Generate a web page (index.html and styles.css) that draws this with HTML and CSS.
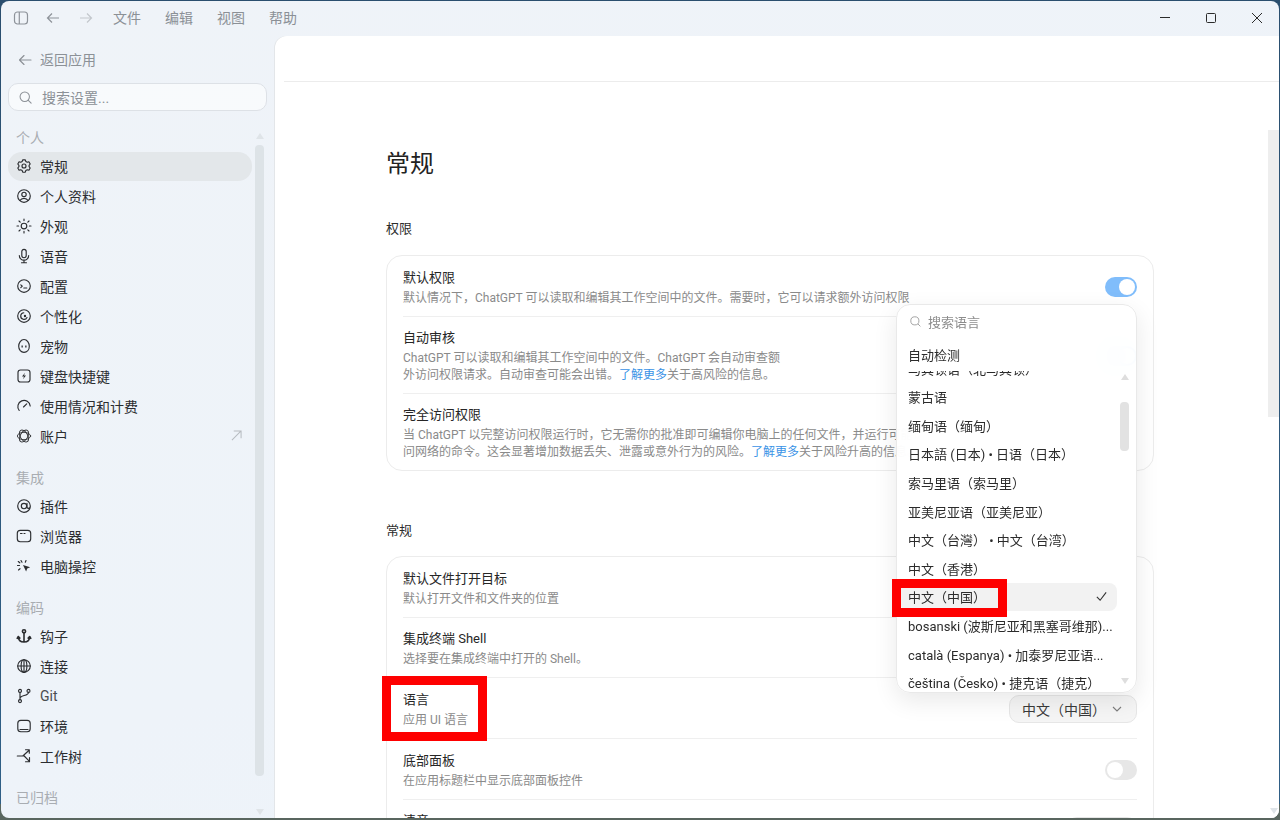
FILE: index.html
```html
<!DOCTYPE html>
<html lang="zh-CN">
<head>
<meta charset="utf-8">
<title>设置</title>
<link rel="stylesheet" href="styles.css">
</head>
<body>
<div class="stage">
  <div class="window">
    <header class="titlebar">
      <svg class="tb-icon panel" viewBox="0 0 16 16"><rect x="1.5" y="2" width="13" height="12" rx="3"/><path d="M6.3 2v12"/></svg>
      <svg class="tb-icon back" viewBox="0 0 16 16"><path d="M14 8H2.5M7 3.5 2.5 8 7 12.500"/></svg>
      <svg class="tb-icon forward" viewBox="0 0 16 16"><path d="M2 8h11.500M9 3.500 13.500 8 9 12.500"/></svg>
      <nav class="menus"><span>文件</span><span>编辑</span><span>视图</span><span>帮助</span></nav>
      <div class="win-controls">
        <svg class="win-icon" viewBox="0 0 10 10"><path d="M0 4.500h10"/></svg>
        <svg class="win-icon" viewBox="0 0 10 10"><rect x=".5" y=".5" width="9" height="9" rx="1"/></svg>
        <svg class="win-icon" viewBox="0 0 10 10"><path d="M0 0l10 10M10 0 0 10"/></svg>
      </div>
    </header>

    <aside class="sidebar">
      <div class="back-row">
        <svg class="ic" viewBox="0 0 16 16"><path d="M14 8H2.500M7 3.500 2.500 8 7 12.500"/></svg>
        <span>返回应用</span>
      </div>
      <div class="search">
        <svg class="ic" viewBox="0 0 16 16"><circle cx="7.200" cy="7.200" r="5"/><path d="m11 11 3 3"/></svg>
        <span>搜索设置...</span>
      </div>
      <div class="side-body">
        <div class="side-list">
          <div class="group-label">个人</div>
          <div class="item active"><svg class="ic" viewBox="0 0 16 16"><path d="M6.700 1.800h2.600l.5 1.600 1.500.8 1.600-.4 1.300 2.200-1.100 1.300v1.400l1.100 1.300-1.300 2.200-1.600-.4-1.500.8-.5 1.600H6.700l-.5-1.600-1.500-.8-1.600.4-1.300-2.200 1.100-1.300V7.300L1.800 6l1.300-2.200 1.600.4 1.500-.8z"/><circle cx="8" cy="8" r="2"/></svg><span>常规</span></div>
          <div class="item"><svg class="ic" viewBox="0 0 16 16"><circle cx="8" cy="8" r="6.300"/><circle cx="8" cy="6.400" r="2.200"/><path d="M4 12.600c.8-1.600 2.300-2.300 4-2.300s3.200.7 4 2.300"/></svg><span>个人资料</span></div>
          <div class="item"><svg class="ic" viewBox="0 0 16 16"><circle cx="8" cy="8" r="2.800"/><path d="M8 1v1.600M8 13.400V15M1 8h1.600M13.400 8H15M3 3l1.200 1.200M11.800 11.800 13 13M3 13l1.200-1.200M11.800 4.200 13 3"/></svg><span>外观</span></div>
          <div class="item"><svg class="ic" viewBox="0 0 16 16"><rect x="5.800" y="1.300" width="4.400" height="8.400" rx="2.200"/><path d="M3.300 7.500a4.700 4.700 0 0 0 9.400 0M8 12.200v2.500M5.500 14.700h5"/></svg><span>语音</span></div>
          <div class="item"><svg class="ic" viewBox="0 0 16 16"><circle cx="8" cy="8" r="6.300"/><path d="m4.800 6.800 1.500 1.400-1.500 1.400M7.800 10h3"/></svg><span>配置</span></div>
          <div class="item"><svg class="ic" viewBox="0 0 16 16"><circle cx="8" cy="8" r="6.300"/><path d="M7.800 4.800A3.300 3.300 0 1 0 11 9.500"/><circle cx="9" cy="8" r=".6"/></svg><span>个性化</span></div>
          <div class="item"><svg class="ic" viewBox="0 0 16 16"><path d="M8 1.500c3.100 0 5.300 3.300 5.300 6.800s-2.300 6-5.300 6-5.300-2.500-5.300-6S4.900 1.500 8 1.500z"/><path class="solid" d="M5.500 7.400h1.300v2H5.500zM9.200 7.400h1.300v2H9.200z"/></svg><span>宠物</span></div>
          <div class="item"><svg class="ic" viewBox="0 0 16 16"><rect x="2" y="2" width="12" height="12" rx="2.500"/><path class="solid" d="M9 4.800 6 8.400h2L7 11.200l3-3.600H8z"/></svg><span>键盘快捷键</span></div>
          <div class="item"><svg class="ic" viewBox="0 0 16 16"><path d="M3.200 12.500A6.200 6.200 0 1 1 14.200 8"/><path d="m7.500 9 3.200-3.200"/></svg><span>使用情况和计费</span></div>
          <div class="item"><svg class="ic thin" viewBox="0 0 16 16"><ellipse cx="8" cy="8" rx="6.600" ry="3.700"/><ellipse cx="8" cy="8" rx="6.600" ry="3.700" transform="rotate(60 8 8)"/><ellipse cx="8" cy="8" rx="6.600" ry="3.700" transform="rotate(120 8 8)"/></svg><span>账户</span><svg class="ext" viewBox="0 0 12 12"><path d="M1 11 11 1M3 1h8v8"/></svg></div>

          <div class="group-label spaced">集成</div>
          <div class="item"><svg class="ic" viewBox="0 0 16 16"><path d="M14.300 8.500c0 3-2.700 5.800-6.300 5.800a6.300 6.300 0 1 1 6.300-6.300c0 1.500-.7 2.400-1.800 2.400-.9 0-1.500-.6-1.500-1.400V5.300"/><circle cx="8" cy="8" r="2.700"/></svg><span>插件</span></div>
          <div class="item"><svg class="ic" viewBox="0 0 16 16"><rect x="1.300" y="2.300" width="13.400" height="11.400" rx="3"/><path d="M4.500 5.500h1.600M8 5.500h1"/></svg><span>浏览器</span></div>
          <div class="item"><svg class="ic" viewBox="0 0 16 16"><path d="M1.500 7.500h2M5 2.500l1 1.700M2.300 3.500l1.500 1.300M2.500 12l1.500-1.300M10 2.500 9.300 4.200"/><path class="solid" d="m7 7 7.200 2.300-3 1.100-1.100 3.200z"/></svg><span>电脑操控</span></div>

          <div class="group-label spaced">编码</div>
          <div class="item"><svg class="ic bold" viewBox="0 0 16 16"><circle cx="8" cy="3.300" r="1.600"/><path d="M8 5v9M2.300 8.800c0 3.400 2.500 5.200 5.700 5.200s5.700-1.800 5.700-5.200M1.200 10.300l1.100-1.800 1.500 1.600M12.200 10.100l1.500-1.600 1.100 1.800"/></svg><span>钩子</span></div>
          <div class="item"><svg class="ic" viewBox="0 0 16 16"><circle cx="8" cy="8" r="6.300"/><ellipse cx="8" cy="8" rx="2.900" ry="6.300"/><path d="M1.700 8h12.600M8 1.700v12.600"/></svg><span>连接</span></div>
          <div class="item"><svg class="ic" viewBox="0 0 16 16"><circle cx="4" cy="2.900" r="1.500"/><circle cx="4" cy="13.100" r="1.500"/><circle cx="12.500" cy="2.900" r="1.500"/><path d="M4 4.400v7.200M12.500 4.400c0 3.600-8.500 2.600-8.500 6"/></svg><span class="latin">Git</span></div>
          <div class="item"><svg class="ic" viewBox="0 0 16 16"><rect x="1.800" y="2.300" width="12.400" height="11.400" rx="3"/><path d="M4 11.500h8"/></svg><span>环境</span></div>
          <div class="item"><svg class="ic" viewBox="0 0 16 16"><path d="M1.300 8h5.500l6-5.500M9.500 1.700h3.800v3.500M8.200 8l5 5.200M13.500 9.500v4.200H9.500"/></svg><span>工作树</span></div>

          <div class="group-label spaced">已归档</div>
        </div>
        <div class="vbar side-bar">
          <i class="arrow up"></i>
          <i class="thumb"></i>
          <i class="arrow down"></i>
        </div>
      </div>
    </aside>

    <main class="main">
      <div class="band"></div>
      <div class="content">
        <h1>常规</h1>
        <h2>权限</h2>
        <section class="card perms">
          <div class="row">
            <div class="txt">
              <div class="t">默认权限</div>
              <div class="d">默认情况下，ChatGPT 可以读取和编辑其工作空间中的文件。需要时，它可以请求额外访问权限</div>
            </div>
            <span class="toggle on"><i></i></span>
          </div>
          <div class="row">
            <div class="txt">
              <div class="t">自动审核</div>
              <div class="d">ChatGPT 可以读取和编辑其工作空间中的文件。ChatGPT 会自动审查额<br>外访问权限请求。自动审查可能会出错。<a>了解更多</a>关于高风险的信息。</div>
            </div>
            <span class="toggle on"><i></i></span>
          </div>
          <div class="row">
            <div class="txt">
              <div class="t">完全访问权限</div>
              <div class="d">当 ChatGPT 以完整访问权限运行时，它无需你的批准即可编辑你电脑上的任何文件，并运行可能访<br>问网络的命令。这会显著增加数据丢失、泄露或意外行为的风险。<a>了解更多</a>关于风险升高的信息。</div>
            </div>
          </div>
        </section>

        <h2 class="second">常规</h2>
        <section class="card">
          <div class="row">
            <div class="txt">
              <div class="t">默认文件打开目标</div>
              <div class="d">默认打开文件和文件夹的位置</div>
            </div>
          </div>
          <div class="row">
            <div class="txt">
              <div class="t">集成终端 Shell</div>
              <div class="d">选择要在集成终端中打开的 Shell。</div>
            </div>
          </div>
          <div class="row">
            <div class="txt">
              <div class="t">语言</div>
              <div class="d">应用 UI 语言</div>
            </div>
            <div class="select">
              <span>中文（中国）</span>
              <svg viewBox="0 0 12 12"><path d="m2 4 4 4 4-4"/></svg>
            </div>
          </div>
          <div class="row">
            <div class="txt">
              <div class="t">底部面板</div>
              <div class="d">在应用标题栏中显示底部面板控件</div>
            </div>
            <span class="toggle"><i></i></span>
          </div>
          <div class="row">
            <div class="txt">
              <div class="t">清音</div>
              <div class="d">播放提示音</div>
            </div>
            <div class="select small"></div>
          </div>
        </section>
      </div>
      <div class="vbar page-bar">
        <i class="thumb"></i>
        <i class="arrow down"></i>
      </div>
    </main>
  </div>

  <div class="popup">
    <div class="pop-search">
      <svg viewBox="0 0 16 16"><circle cx="7.200" cy="7.200" r="5"/><path d="m11 11 3 3"/></svg>
      <span>搜索语言</span>
    </div>
    <div class="pop-auto">自动检测</div>
    <div class="pop-body">
      <div class="pop-list">
        <div class="opt first">马其顿语（北马其顿）</div>
        <div class="opt">蒙古语</div>
        <div class="opt">缅甸语（缅甸）</div>
        <div class="opt">日本語 (日本) • 日语（日本）</div>
        <div class="opt">索马里语（索马里）</div>
        <div class="opt">亚美尼亚语（亚美尼亚）</div>
        <div class="opt">中文（台灣） • 中文（台湾）</div>
        <div class="opt">中文（香港）</div>
        <div class="opt selected"><span>中文（中国）</span><svg viewBox="0 0 14 14"><path d="m2 7.500 3.500 3.500L12 2.500"/></svg></div>
        <div class="opt">bosanski (波斯尼亚和黑塞哥维那)...</div>
        <div class="opt">català (Espanya) • 加泰罗尼亚语...</div>
        <div class="opt">čeština (Česko) • 捷克语（捷克）</div>
      </div>
      <div class="vbar pop-bar">
        <i class="arrow up"></i>
        <i class="thumb"></i>
        <i class="arrow down"></i>
      </div>
    </div>
  </div>

  <div class="mark mark-lang"></div>
  <div class="mark mark-opt"></div>
</div>
</body>
</html>
```

FILE: styles.css
```css
* { box-sizing: border-box; }
html, body { margin: 0; height: 100%; overflow: hidden; }
body {
  font-family: Roboto, "Noto Sans CJK SC", "Noto Sans", sans-serif;
  color: #2b2b2b;
  font-size: 14px;
}
.stage {
  position: relative;
  width: 1280px;
  height: 820px;
  padding: 1px 1px 2px 1px;
  overflow: hidden;
  background: linear-gradient(to bottom, #2a4e6e 0, #2f5f86 98%, #59665f 98%);
}
.window {
  height: 817px;
  border-radius: 8px;
  overflow: hidden;
  display: grid;
  grid-template-columns: 274px 1fr;
  grid-template-rows: 35px 1fr;
  background: linear-gradient(160deg, #eff3f8 0%, #eef3f9 60%, #edf4fa 100%);
}

/* title bar */
.titlebar {
  grid-column: 1 / 3;
  display: flex;
  align-items: center;
  padding: 0 0 1px 12px;
  color: #8b9096;
}
.tb-icon { width: 16px; height: 16px; fill: none; stroke: #8e939a; stroke-width: 1.200; }
.back { margin-left: 16px; }
.forward { margin-left: 17px; stroke: #c3c7cc; }
.menus { display: flex; gap: 24px; margin-left: 19px; line-height: 20px; }
.win-controls { margin-left: auto; display: flex; gap: 36px; padding-right: 17px; }
.win-icon { width: 10px; height: 10px; fill: none; stroke: #2b2b2b; stroke-width: 1; overflow: visible; }

/* sidebar */
.sidebar {
  padding: 12px 0 0 7px;
  display: flex;
  flex-direction: column;
  overflow: hidden;
  min-height: 0;
}
.ic {
  width: 16px;
  height: 16px;
  flex: none;
  fill: none;
  stroke: currentColor;
  stroke-width: 1.150;
  stroke-linejoin: round;
  stroke-linecap: round;
}
.ic.bold { stroke-width: 1.600; }
.ic.thin { stroke-width: .9; }
.ic .solid { fill: currentColor; stroke: none; }
.back-row {
  height: 24px;
  display: flex;
  align-items: center;
  gap: 7px;
  padding-left: 9px;
  color: #8c9197;
}
.back-row span { margin-top: -2px; }
.search {
  height: 28px;
  width: 259px;
  margin-top: 11px;
  display: flex;
  align-items: center;
  gap: 9px;
  padding-left: 9px;
  border: 1px solid #dde1e6;
  border-radius: 10px;
  background: rgba(255, 255, 255, .55);
  color: #8c9197;
}
.search .ic { width: 15px; height: 15px; stroke-width: 1.100; }
.side-body { display: flex; margin-top: 17px; }
.side-list { width: 244px; flex: none; }
.group-label { height: 20px; line-height: 20px; margin-bottom: 4px; padding-left: 8px; color: #a9adb2; }
.group-label.spaced { margin-top: 17px; }
.item {
  height: 29px;
  margin-bottom: 1px;
  display: flex;
  align-items: center;
  gap: 8px;
  padding: 0 0 2px 8px;
  border-radius: 14px;
  color: #2b2d30;
}
.item.active { background: #e3e7ea; }
.latin { color: #4a4d50; }
.ext { width: 11px; height: 11px; margin-left: auto; margin-right: 10px; fill: none; stroke: #b7bbc0; stroke-width: 1.100; }

/* scrollbars */
.vbar { display: flex; flex-direction: column; align-items: center; flex: none; }
.arrow { display: block; width: 0; height: 0; border-left: 4.500px solid transparent; border-right: 4.500px solid transparent; }
.arrow.up { border-bottom: 6px solid #dfe4e8; }
.arrow.down { border-top: 6px solid #dfe4e8; }
.thumb { display: block; width: 100%; border-radius: 4px; }
.side-bar { width: 9px; margin-left: 3px; padding-top: 5px; }
.side-bar .thumb { height: 631px; margin-top: 6px; background: #dde3e7; }
.side-bar .arrow.down { margin-top: 33px; }

/* main */
.main {
  position: relative;
  background: #fff;
  border-top-left-radius: 12px;
  box-shadow: -1px 0 0 #e3e6e9;
  overflow: hidden;
  min-height: 0;
}
.band { height: 46px; margin-left: 9px; border-bottom: 1px solid #ececec; }
.content { width: 768px; margin-left: 111px; padding-top: 66px; }
h1 { margin: 0; font-size: 24px; line-height: 32px; font-weight: 400; color: #222; }
h2 { margin: 39px 0 16px; font-size: 13px; line-height: 20px; font-weight: 400; color: #2b2b2b; }
h2.second { margin: 49.500px 0 15.500px; }
.card { border: 1px solid #ececec; border-radius: 16px; padding: 0 16px; }
.row {
  display: flex;
  align-items: center;
  justify-content: space-between;
  border-bottom: 1px solid #efefef;
  padding: 11.500px 0 9.200px;
}
.row:last-child { border-bottom: 0; }
.perms .row:last-child { padding: 10.700px 0 9px; }
.t { font-size: 13px; line-height: 20px; color: #262626; }
.d { margin-top: 2px; font-size: 12px; line-height: 17px; color: #8a8a8a; white-space: nowrap; }
.d a { color: #3a93e6; }
.toggle {
  flex: none;
  width: 32px;
  height: 20px;
  display: flex;
  align-items: center;
  padding: 0 2px;
  border-radius: 10px;
  background: #e7e7e7;
}
.toggle i { display: block; width: 16px; height: 16px; border-radius: 50%; background: #fff; }
.toggle.on { background: #80bdfb; justify-content: flex-end; }
.select {
  flex: none;
  width: 128px;
  height: 28px;
  display: flex;
  align-items: center;
  gap: 7px;
  padding-left: 12px;
  border: 1px solid #e6e6e6;
  border-radius: 10px;
  background: #f5f5f5;
  font-size: 14px;
  color: #3a3a3a;
}
.select svg { width: 12px; height: 12px; margin-left: -2px; fill: none; stroke: #7d7d7d; stroke-width: 1.100; }
.select.small { width: 70px; }
.page-bar {
  position: absolute;
  top: 94px;
  bottom: 0;
  right: 0;
  width: 11px;
}
.page-bar .thumb { height: 287px; border-radius: 0; background: #eeeeee; }
.page-bar .arrow.down { margin-top: auto; margin-bottom: 4px; }

/* language popup */
.popup {
  position: absolute;
  left: 896px;
  top: 304px;
  width: 241px;
  height: 389px;
  border: 1px solid #e9e9e9;
  border-radius: 14px;
  background: rgba(255, 255, 255, .93);
  -webkit-backdrop-filter: blur(14px);
  backdrop-filter: blur(14px);
  box-shadow: 0 8px 24px rgba(0, 0, 0, .09);
  overflow: hidden;
  display: flex;
  flex-direction: column;
}
.pop-search {
  height: 33px;
  flex: none;
  display: flex;
  align-items: center;
  gap: 6px;
  padding-left: 12px;
  font-size: 13px;
  color: #8d8d8d;
}
.pop-search svg { width: 13px; height: 13px; fill: none; stroke: #9a9a9a; stroke-width: 1.100; }
.pop-auto { height: 33px; flex: none; line-height: 36px; padding-left: 11px; font-size: 13px; color: #2b2b2b; }
.pop-body { display: flex; flex: 1; min-height: 0; }
.pop-list { width: 220px; padding-left: 3px; flex: none; overflow: hidden; }
.opt {
  height: 28.600px;
  display: flex;
  align-items: center;
  padding: 0 8px;
  border-radius: 8px;
  font-size: 13px;
  color: #2b2b2b;
  white-space: nowrap;
}
.opt.first { margin-top: -17.200px; }
.opt.selected { background: #f2f2f2; justify-content: space-between; padding-right: 9px; }
.opt.selected svg { width: 13px; height: 13px; fill: none; stroke: #333; stroke-width: 1.200; }
.pop-bar { width: 9px; margin-left: 3px; padding: 3px 0 8px; }
.pop-bar .thumb { height: 49px; margin-top: 22px; background: #e2e2e2; }
.pop-bar .arrow.up { border-bottom-color: #dedede; }
.pop-bar .arrow.down { border-top-color: #dedede; margin-top: auto; }

/* red annotations */
.mark { position: absolute; border: 9.500px solid #fe0000; }
.mark-lang { left: 382px; top: 676px; width: 105px; height: 65px; }
.mark-opt { left: 892px; top: 579px; width: 115px; height: 38px; }
```
